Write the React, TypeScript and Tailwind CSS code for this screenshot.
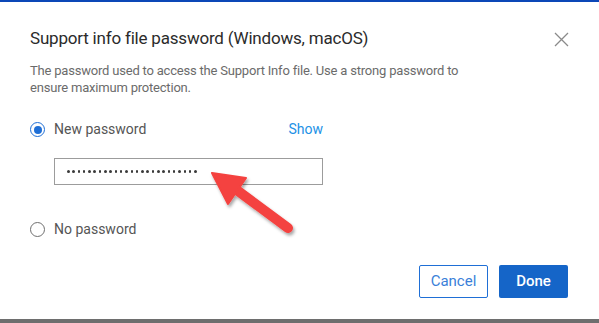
import React from "react";

// Radio dot used by the two password options
function Radio({ checked }: { checked?: boolean }) {
  if (checked) {
    return (
      <span className="flex h-[15px] w-[15px] items-center justify-center rounded-full border-[1.5px] border-[#1f6fd6]">
        <span className="h-[8px] w-[8px] rounded-full bg-[#1f6fd6]" />
      </span>
    );
  }
  return <span className="h-[15px] w-[15px] rounded-full border border-[#6f6f6f]" />;
}

// Red annotation arrow drawn over the dialog
function Arrow() {
  return (
    <svg
      className="pointer-events-none absolute left-0 top-0"
      width="599"
      height="323"
      viewBox="0 0 599 323"
      aria-hidden="true"
    >
      <defs>
        <filter id="shadow" x="-20%" y="-20%" width="140%" height="140%">
          <feDropShadow dx="1.5" dy="2.5" stdDeviation="1.6" floodColor="#000" floodOpacity="0.35" />
        </filter>
      </defs>
      <g filter="url(#shadow)" fill="#f4423f" stroke="#f4423f">
        <line x1="234" y1="188" x2="288" y2="228" strokeWidth="10" strokeLinecap="round" />
        <polygon points="212,173 246,178 228,204" strokeWidth="2" strokeLinejoin="round" />
      </g>
    </svg>
  );
}

const dots = Array.from({ length: 25 });

export default function App() {
  const font = { fontFamily: 'Roboto, "Open Sans", sans-serif' };

  return (
    <div className="relative flex h-[323px] w-[599px] flex-col bg-white" style={font}>
      <div className="h-[2px] bg-[#0c47b7]" />

      <div className="flex flex-1 flex-col px-[30px] pt-[23px]">
        {/* Header */}
        <div className="flex items-start justify-between">
          <h1 className="text-[17px] leading-[26px] tracking-[-0.2px] text-[#2b2b2b]">
            Support info file password (Windows, macOS)
          </h1>
          <button aria-label="Close" className="mt-[7px] text-[#8a8a8a]">
            <svg width="15" height="15" viewBox="0 0 15 15" fill="none" stroke="currentColor" strokeWidth="1.3">
              <path d="M1 1l13 13M14 1L1 14" />
            </svg>
          </button>
        </div>

        <p className="mt-[11px] w-[450px] text-[13px] leading-[17px] tracking-[-0.2px] text-[#6b6b6b]">
          The password used to access the Support Info file. Use a strong password to ensure maximum protection.
        </p>

        {/* New password option */}
        <div className="mt-[23px] flex w-[293px] items-center justify-between">
          <label className="flex h-[20px] items-center gap-[9px] text-[14px] text-[#555]">
            <Radio checked />
            New password
          </label>
          <button className="text-[14px] text-[#2291e6]">Show</button>
        </div>

        <div className="ml-[24px] mt-[18px] flex h-[27px] w-[269px] items-center gap-[2.8px] border border-[#9c9c9c] pl-[12px]">
          {dots.map((_, i) => (
            <span key={i} className="h-[2.5px] w-[2.5px] rounded-full bg-[#3a3a3a]" />
          ))}
        </div>

        {/* No password option */}
        <label className="mt-[34px] flex h-[20px] items-center gap-[9px] text-[14px] text-[#555]">
          <Radio />
          No password
        </label>

        {/* Footer */}
        <div className="mt-[26px] flex justify-end gap-[11px] pr-[1px]">
          <button className="h-[33px] w-[69px] rounded-[2px] border border-[#1f6fd6] text-[15px] text-[#3a7fd9]">
            Cancel
          </button>
          <button className="h-[33px] w-[69px] rounded-[2px] bg-[#1565c8] text-[15px] font-medium text-white">
            Done
          </button>
        </div>
      </div>

      <div className="h-[4px] bg-[#6e6e6e]" />
      <Arrow />
    </div>
  );
}
